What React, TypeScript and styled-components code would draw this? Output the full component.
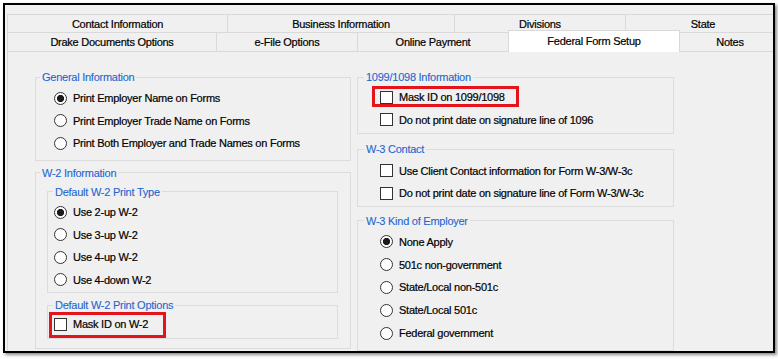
import styled, { createGlobalStyle } from 'styled-components'

const GlobalStyle = createGlobalStyle`
  html, body {
    margin: 0;
    background: #fff;
  }
  body {
    font-family: "Liberation Sans", Arial, sans-serif;
    font-size: 11px;
    letter-spacing: -0.25px;
    color: #000;
    -webkit-text-stroke: 0.2px currentColor;
  }
`

type TabDef = { label: string, width: number, selected?: boolean }

const topRow: TabDef[] = [
  { label: 'Contact Information', width: 221 },
  { label: 'Business Information', width: 227 },
  { label: 'Divisions', width: 171 },
  { label: 'State', width: 155 },
]

const bottomRow: TabDef[] = [
  { label: 'Drake Documents Options', width: 210 },
  { label: 'e-File Options', width: 141 },
  { label: 'Online Payment', width: 151 },
  { label: 'Federal Form Setup', width: 171, selected: true },
  { label: 'Notes', width: 101 },
]

export default function App() {
  return (
    <Screen>
      <GlobalStyle />
      <Window>
        <TabStrip>
          <TabRow $h={18}>
            {topRow.map(t => <Tab key={t.label} $w={t.width}>{t.label}</Tab>)}
          </TabRow>
          <TabRow $h={19}>
            {bottomRow.map(t => (
              <Tab key={t.label} $w={t.width} $selected={t.selected}>{t.label}</Tab>
            ))}
          </TabRow>
        </TabStrip>

        <Panel>
          <Column $w={316}>
            <Group $labelInset={4}>
              <Legend>General Information</Legend>
              <Body $pad="3px 0 5px 18px">
                <Option><Radio $checked />Print Employer Name on Forms</Option>
                <Option><Radio />Print Employer Trade Name on Forms</Option>
                <Option><Radio />Print Both Employer and Trade Names on Forms</Option>
              </Body>
            </Group>

            <Group $labelInset={4} $mt={5}>
              <Legend>W-2 Information</Legend>
              <Body $pad="0 12px 9px 11px">
                <Group $labelInset={5} $mt={5}>
                  <Legend>Default W-2 Print Type</Legend>
                  <Body $pad="2.5px 0 1px 6px">
                    <Option><Radio $checked />Use 2-up W-2</Option>
                    <Option><Radio />Use 3-up W-2</Option>
                    <Option><Radio />Use 4-up W-2</Option>
                    <Option><Radio />Use 4-down W-2</Option>
                  </Body>
                </Group>
                <Group $labelInset={5} $mt={5}>
                  <Legend>Default W-2 Print Options</Legend>
                  <Body $pad="1px 0 2px 6px">
                    <Option>
                      <Highlight $box={[-1, -5, 117, 26]}>
                        <Checkbox />Mask ID on W-2
                      </Highlight>
                    </Option>
                  </Body>
                </Group>
              </Body>
            </Group>
          </Column>

          <Column $w={317}>
            <Group $labelInset={6}>
              <Legend>1099/1098 Information</Legend>
              <Body $pad="2px 0 2px 22px">
                <Option>
                  <Highlight $box={[0, -8, 147, 21]}>
                    <Checkbox />Mask ID on 1099/1098
                  </Highlight>
                </Option>
                <Option><Checkbox />Do not print date on signature line of 1096</Option>
              </Body>
            </Group>

            <Group $labelInset={6} $mt={8}>
              <Legend>W-3 Contact</Legend>
              <Body $pad="3.5px 0 1px 22px">
                <Option><Checkbox />Use Client Contact information for Form W-3/W-3c</Option>
                <Option><Checkbox />Do not print date on signature line of Form W-3/W-3c</Option>
              </Body>
            </Group>

            <Group $labelInset={6} $mt={7}>
              <Legend>W-3 Kind of Employer</Legend>
              <Body $pad="3px 0 6px 22px">
                <Option $h={22.8}><Radio $checked />None Apply</Option>
                <Option $h={22.8}><Radio />501c non-government</Option>
                <Option $h={22.8}><Radio />State/Local non-501c</Option>
                <Option $h={22.8}><Radio />State/Local 501c</Option>
                <Option $h={22.8}><Radio />Federal government</Option>
              </Body>
            </Group>
          </Column>
        </Panel>
      </Window>
    </Screen>
  )
}

const Screen = styled.div`
  width: 778px;
  height: 359px;
  padding: 3px 0 0 3px;
  box-sizing: border-box;
  overflow: hidden;
`

const Window = styled.div`
  width: 772px;
  height: 350px;
  box-sizing: border-box;
  border: 2px solid #000;
  background: #f0f0f0;
  box-shadow: 2px 2px 3px rgba(0, 0, 0, 0.45);
  padding: 9px 0 0 2px;
  overflow: hidden;
  display: flex;
  flex-direction: column;
`

const TabStrip = styled.div`
  width: 774px;
  flex-shrink: 0;
  display: flex;
  flex-direction: column;
`

const TabRow = styled.div<{ $h: number }>`
  display: flex;
  height: ${p => p.$h}px;
`

const Tab = styled.div<{ $w: number, $selected?: boolean }>`
  width: ${p => p.$w}px;
  flex-shrink: 0;
  box-sizing: border-box;
  display: flex;
  align-items: center;
  justify-content: center;
  white-space: nowrap;
  border-top: 1px solid #d9d9d9;
  border-right: 1px solid #d9d9d9;
  background: #f0f0f0;

  &:first-child {
    border-left: 1px solid #d9d9d9;
  }

  ${p => p.$selected && `
    position: relative;
    z-index: 1;
    background: #fff;
    margin-top: -2px;
    height: calc(100% + 3px);
    padding-bottom: 2px;
    border-left: 1px solid #d9d9d9;
    margin-left: -1px;
    width: ${p.$w + 1}px;
  `}
`

const Panel = styled.div`
  flex: 1;
  display: flex;
  gap: 6px;
  align-items: flex-start;
  border-top: 1px solid #d9d9d9;
  border-left: 1px solid #d9d9d9;
  padding: 18px 0 0 27px;
  width: 774px;
  box-sizing: border-box;
`

const Column = styled.div<{ $w: number }>`
  width: ${p => p.$w}px;
  flex-shrink: 0;
  display: flex;
  flex-direction: column;
`

const Group = styled.fieldset<{ $labelInset: number, $mt?: number }>`
  margin: ${p => p.$mt ?? 0}px 0 0 0;
  padding: 0;
  min-width: 0;
  border: 1px solid #dcdcdc;

  & > legend {
    margin-left: ${p => p.$labelInset}px;
  }
`

const Legend = styled.legend`
  padding: 0 2px;
  line-height: 14px;
  color: #1d66d0;
  -webkit-text-stroke: 0.1px currentColor;
`

const Body = styled.div<{ $pad: string }>`
  padding: ${p => p.$pad};
  display: flex;
  flex-direction: column;
`

const Option = styled.div<{ $h?: number }>`
  height: ${p => p.$h ?? 22.5}px;
  display: flex;
  align-items: center;
  gap: 6px;
  white-space: nowrap;
`

const Radio = styled.span<{ $checked?: boolean }>`
  width: 13px;
  height: 13px;
  flex-shrink: 0;
  box-sizing: border-box;
  border: 1px solid #333;
  border-radius: 50%;
  background: ${p => p.$checked
    ? 'radial-gradient(circle, #1b1b1b 0 3.3px, #fff 3.9px)'
    : '#fff'};
`

const Checkbox = styled.span`
  width: 13px;
  height: 13px;
  flex-shrink: 0;
  box-sizing: border-box;
  border: 1px solid #333;
  background: #fff;
`

// red annotation frame: [top, left, width, height] relative to the option
const Highlight = styled.span<{ $box: [number, number, number, number] }>`
  position: relative;
  display: flex;
  align-items: center;
  gap: 6px;
  height: 100%;

  &::after {
    content: '';
    position: absolute;
    top: ${p => p.$box[0]}px;
    left: ${p => p.$box[1]}px;
    width: ${p => p.$box[2]}px;
    height: ${p => p.$box[3]}px;
    box-sizing: border-box;
    border: 3px solid #e3141b;
    pointer-events: none;
  }
`
